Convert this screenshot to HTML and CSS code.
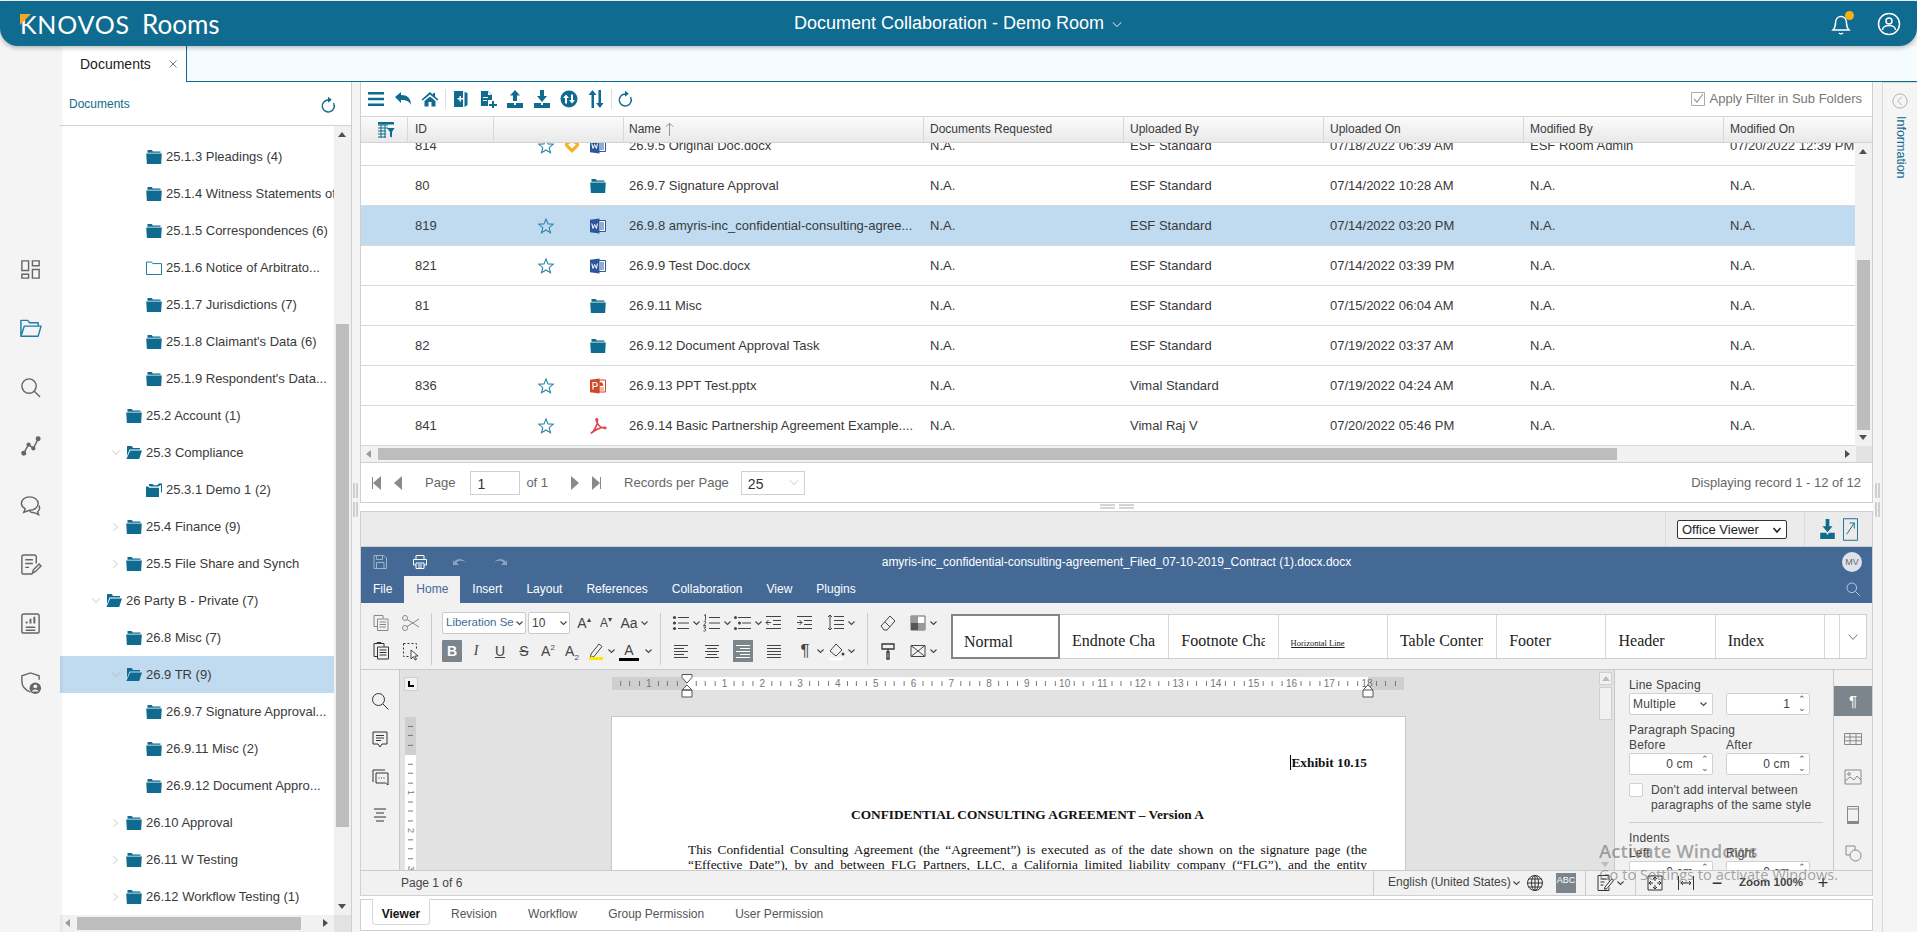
FILE: index.html
```html
<!DOCTYPE html>
<html lang="en">
<head>
<meta charset="utf-8">
<title>Knovos Rooms</title>
<link rel="stylesheet" href="styles.css">
</head>
<body>
<svg class="defs" aria-hidden="true">
  <symbol id="folder" viewBox="0 0 16 14"><path d="M1.5 0h4.2l1.2 1.4h7.6v1.4H1.5z"/><path d="M.2 3.6h15.6l-.7 10.4H.9z"/></symbol>
  <symbol id="folder-open" viewBox="0 0 16 14"><path d="M1 0h4.600l1.500 2H14v1.600H3.600L1 10z"/><path d="M4.200 4.600H16L13.200 13H.4z"/></symbol>
  <symbol id="folder-half" viewBox="0 0 16 14"><path d="M3 1h3.600l1.200 1.200h3.200L13 .6h3v9h-1V2L12 3.600H4.500L3 2.800z"/><path d="M0 3.600h2l1.400 1.200H13V14H0z"/></symbol>
  <symbol id="folder-line" viewBox="0 0 16 14"><path d="M.5 1h5l1.300 1.600h8.700v10.900H.5z" fill="none" stroke="currentColor"/></symbol>
  <symbol id="star" viewBox="0 0 16 16"><path d="M8 1l2 4.900 5.200.4-4 3.400 1.300 5.100L8 12l-4.500 2.800 1.300-5.100-4-3.400 5.200-.4z" fill="none" stroke="#2f88ad" stroke-width="1.100"/></symbol>
  <symbol id="badge" viewBox="0 0 16 16"><path d="M1 5l7-4 7 4v3l-7 7-7-7zM4 6.500l4 4 4-4-4-2z" fill="#f5b324" fill-rule="evenodd"/></symbol>
  <symbol id="word" viewBox="0 0 16 16"><path d="M9 2.500h6.500v11H9" fill="#fff" stroke="#2b579a"/><path d="M10 5h4M10 7h4M10 9h4M10 11h4" stroke="#2b579a"/><path d="M0 1.800 9.500.4v15.200L0 14.200z" fill="#2b579a"/><path d="M1.800 5.500l1.200 5 1.700-4 1.700 4 1.100-5" fill="none" stroke="#fff"/></symbol>
  <symbol id="ppt" viewBox="0 0 16 16"><path d="M9 2h6.500v12H9z" fill="#fff" stroke="#d24726"/><path d="M10 4.500a3 3 0 0 1 3 3h-3zM10 10h4M10 12h4" fill="#d24726" stroke="#d24726" stroke-width=".8"/><path d="M0 1.800 9.500.4v15.200L0 14.200z" fill="#d24726"/><path d="M3 11.500v-7h2.200a2 2 0 0 1 0 4H3" fill="none" stroke="#fff" stroke-width="1.200"/></symbol>
  <symbol id="pdf" viewBox="0 0 16 16"><path d="M.8 15.400C4 13.500 8 6.500 7.400 1.300c-.1-1-1.500-.6-1.300.6.600 4 4 8 9 8.600 1 .1 1-1.100 0-1.100-4.800-.3-10 2.600-14.300 6z" fill="none" stroke="#e2454f" stroke-width="1.700"/></symbol>
  <symbol id="chev-r" viewBox="0 0 10 14"><path d="M2 1.500 8 7l-6 5.500" fill="none" stroke="#b0b0b0"/></symbol>
  <symbol id="chev-d" viewBox="0 0 14 10"><path d="M1.500 2 7 8l5.500-6" fill="none" stroke="#b0b0b0"/></symbol>
  <symbol id="chev-dark" viewBox="0 0 14 10"><path d="M1.500 2 7 8l5.500-6" fill="none" stroke="#555"/></symbol>
  <symbol id="v" viewBox="0 0 10 10"><path d="M2 3.500 5 6.500l3-3" fill="none" stroke="#444" stroke-width="1.100"/></symbol>
  <symbol id="refresh" viewBox="0 0 16 18"><path d="M12.500 7a6 6 0 1 1-5-3" fill="none" stroke="currentColor" stroke-width="1.400"/><path d="M7 .8v6l3.800-3z" fill="currentColor"/></symbol>
  <symbol id="i-list" viewBox="0 0 20 20"><path d="M7 4.500h11M7 10h11M7 15.500h11" stroke="#444"/><circle cx="3.500" cy="4.500" r="1.600" fill="#444"/><circle cx="3.500" cy="10" r="1.600" fill="#444"/><circle cx="3.500" cy="15.500" r="1.600" fill="#444"/></symbol>
  <symbol id="i-num" viewBox="0 0 20 20"><path d="M7 4.500h11M7 10h11M7 15.500h11" stroke="#444"/><path d="M2 2.500l1.500-1v6M1.500 9c1-1.500 3-.5 2 1L1.500 12.500H4M1.500 14H4l-1.500 1.800c1.500 0 1.500 2.500 0 2.500-.5 0-1-.2-1.200-.6" fill="none" stroke="#444" stroke-width=".9"/></symbol>
  <symbol id="i-multi" viewBox="0 0 20 20"><path d="M5 4.500h13M9 10h9M5 15.500h13" stroke="#444"/><circle cx="2.500" cy="4.500" r="1.500" fill="#444"/><circle cx="6.500" cy="10" r="1.500" fill="#444"/><circle cx="2.500" cy="15.500" r="1.500" fill="#444"/></symbol>
  <symbol id="i-out" viewBox="0 0 20 20"><path d="M2 3.500h15M9 7.500h8M9 11.500h8M2 15.500h15M7 9.500H2m2.500-2.500L2 9.500 4.500 12" fill="none" stroke="#444"/></symbol>
  <symbol id="i-in" viewBox="0 0 20 20"><path d="M2 3.500h15M9 7.500h8M9 11.500h8M2 15.500h15M2 9.500h5M4.500 7 7 9.500 4.500 12" fill="none" stroke="#444"/></symbol>
  <symbol id="i-space" viewBox="0 0 20 20"><path d="M8 3.500h10M8 7.500h10M8 11.500h10M8 15.500h10M4 2v15M2 4l2-2 2 2M2 15l2 2 2-2" fill="none" stroke="#444"/></symbol>
  <symbol id="i-al" viewBox="0 0 20 20"><path d="M3 4.500h14M3 7.500h10M3 10.500h14M3 13.500h10M3 16.500h14" stroke="currentColor"/></symbol>
  <symbol id="i-ac" viewBox="0 0 20 20"><path d="M3 4.500h14M5 7.500h10M3 10.500h14M5 13.500h10M3 16.500h14" stroke="currentColor"/></symbol>
  <symbol id="i-ar" viewBox="0 0 20 20"><path d="M3 4.500h14M7 7.500h10M3 10.500h14M7 13.500h10M3 16.500h14" stroke="currentColor"/></symbol>
  <symbol id="i-aj" viewBox="0 0 20 20"><path d="M3 4.500h14M3 7.500h14M3 10.500h14M3 13.500h14M3 16.500h14" stroke="currentColor"/></symbol>
  <symbol id="i-copy" viewBox="0 0 20 20"><path d="M3 2.500h9v3M3 2.500v11h3M6.500 6h10.500v11.500H6.500z" fill="none" stroke="currentColor"/><path d="M8.500 9h6.500M8.500 11.500h6.500M8.500 14h6.500" stroke="currentColor"/></symbol>
  <symbol id="i-cut" viewBox="0 0 20 20"><circle cx="4" cy="5" r="2.500" fill="none" stroke="currentColor"/><circle cx="4" cy="15" r="2.500" fill="none" stroke="currentColor"/><path d="M6 6.500 18 14M6 13.500 18 6" stroke="currentColor"/></symbol>
  <symbol id="i-paste" viewBox="0 0 20 20"><path d="M6 2.500H3v13h3M6 2.500h4v-1H6zM10 2.500h3v3" fill="none" stroke="#333"/><path d="M6.500 6h11v12h-11zM8.500 9h7M8.500 11.500h7M8.500 14h7" fill="none" stroke="#333"/></symbol>
  <symbol id="i-sel" viewBox="0 0 20 20"><path d="M2.500 2.500h13v6M2.500 2.500v13h6" fill="none" stroke="#333" stroke-dasharray="2 2"/><path d="M10 9v9l2.400-2.400 1.600 3.400 1.500-.7-1.600-3.300H17z" fill="#fff" stroke="#333" stroke-width=".9"/></symbol>
  <symbol id="i-erase" viewBox="0 0 20 20"><path d="M3 13 12 3l5 5-8 9H6z" fill="none" stroke="#444"/><path d="M7 9l5 5" stroke="#444"/></symbol>
  <symbol id="i-color" viewBox="0 0 20 20"><path d="M3 3h14v14H3z" fill="#fff" stroke="#666"/><path d="M3 10h7V3H3zM10 10h7v7h-7z" fill="#999"/><path d="M3 10h7v7H3z" fill="#555"/></symbol>
  <symbol id="i-brush" viewBox="0 0 20 20"><path d="M4 3h12v5H4zM10 8v3h-1v7h2v-7h-1" fill="none" stroke="#333" stroke-width="1.300"/></symbol>
  <symbol id="i-mail" viewBox="0 0 20 20"><path d="M3 4.500h14v11H3zM3 4.500l14 11M17 4.500l-14 11" fill="none" stroke="#444"/></symbol>
  <symbol id="i-pen" viewBox="0 0 20 20"><path d="M5 13 13 3l3 2.500-8 10-3.500 1z" fill="none" stroke="#444"/><path d="M3 16h14v3H3z" fill="#ffe600"/></symbol>
  <symbol id="i-fill" viewBox="0 0 20 20"><path d="M4 10l6-7 6 6-6 6z" fill="none" stroke="#444"/><circle cx="17" cy="13" r="1.500" fill="#444"/><path d="M3 17h14v2.500H3z" fill="#fff"/></symbol>
  <symbol id="i-search" viewBox="0 0 20 20"><circle cx="8.500" cy="8.500" r="6" fill="none" stroke="currentColor"/><path d="m13 13 5.500 5.500" stroke="currentColor"/></symbol>
  <symbol id="i-comment" viewBox="0 0 20 20"><path d="M3 3h14v12h-5l-2 3-2-3H3zM6 6.500h8M6 9h8M6 11.500h5" fill="none" stroke="#333"/></symbol>
  <symbol id="i-comments" viewBox="0 0 20 20"><path d="M3 15V3h12M6 6h12v12l-2.500-2H6z" fill="none" stroke="#333"/><path d="M8.500 11h1M11 11h1M13.500 11h1" stroke="#333"/></symbol>
  <symbol id="i-nav" viewBox="0 0 20 20"><path d="M4 4h12M6 8h8M4 12h12M6 16h8" stroke="#333"/></symbol>
  <symbol id="i-table" viewBox="0 0 20 20"><path d="M1.500 4.500h17v11h-17zM1.500 8h17M1.500 11.800h17M7 4.500v11M13 4.500v11" fill="none" stroke="#888"/></symbol>
  <symbol id="i-image" viewBox="0 0 20 20"><path d="M2 3h16v14H2z" fill="none" stroke="#888"/><circle cx="6" cy="7" r="1.300" fill="none" stroke="#888"/><path d="M2 14l5-4 4 3 3-4 4 4" fill="none" stroke="#888"/></symbol>
  <symbol id="i-page" viewBox="0 0 20 20"><path d="M4.500 1.500h11v17h-11zM4.500 4h11" fill="none" stroke="#888"/><path d="M4.500 16h11v2.500h-11z" fill="#888"/></symbol>
  <symbol id="i-shape" viewBox="0 0 20 20"><path d="M3 3h9v4M3 3v9h4" fill="none" stroke="#888"/><circle cx="12.500" cy="12.500" r="5.500" fill="none" stroke="#888"/></symbol>
  <symbol id="i-globe" viewBox="0 0 20 20"><circle cx="10" cy="10" r="7.500" fill="none" stroke="#333"/><ellipse cx="10" cy="10" rx="3.500" ry="7.500" fill="none" stroke="#333"/><path d="M10 2.500v15M2.500 10h15M3.500 6h13M3.500 14h13" stroke="#333" fill="none"/></symbol>
  <symbol id="i-edit" viewBox="0 0 20 20"><path d="M3 2.500h11v5M3 2.500v15h11v-3M5.500 6h6M5.500 9h4M5.500 12h3" fill="none" stroke="#333"/><path d="M10 14 16.500 6l2 1.600L12 15.500l-2.500.8z" fill="none" stroke="#333"/></symbol>
  <symbol id="i-fit" viewBox="0 0 20 20"><path d="M3 3h14v14H3zM10 4v4m-2-2 2-2 2 2M10 16v-4m-2 2 2 2 2-2M4 10h4M6 8l-2 2 2 2M16 10h-4M14 8l2 2-2 2" fill="none" stroke="#333"/></symbol>
  <symbol id="i-fitw" viewBox="0 0 20 20"><path d="M2.500 3v14M17.500 3v14M5 10h10M7 8l-2 2 2 2M13 8l2 2-2 2" fill="none" stroke="#333"/></symbol>
</svg>

<header class="topbar">
  <div class="brand"><span class="logo-word">KNOVOS</span><span class="logo-rooms">Rooms</span><svg class="logo-mark" viewBox="0 0 10 10"><path d="M0 0h10L0 10z" fill="#f5a623"/></svg></div>
  <div class="room-title">Document Collaboration - Demo Room<svg class="room-chev" viewBox="0 0 14 10"><path d="M2 2.500 7 7.500l5-5" fill="none" stroke="#a9c8d6" stroke-width="1.200"/></svg></div>
  <div class="top-actions">
    <span class="bell"><svg viewBox="0 0 22 24" width="22" height="24"><path d="M3 18c2-2 2.500-3.500 2.500-7 0-4 2.500-6.500 5.500-6.500s5.500 2.500 5.500 6.500c0 3.500.5 5 2.500 7zM9 21c1 1 3 1 4 0" fill="none" stroke="#fff" stroke-width="1.500"/></svg><i class="bell-dot"></i></span>
    <svg class="user" viewBox="0 0 24 24" width="24" height="24"><circle cx="12" cy="12" r="10.500" fill="none" stroke="#fff" stroke-width="1.500"/><circle cx="12" cy="9" r="3" fill="none" stroke="#fff" stroke-width="1.500"/><path d="M5.500 18c0-6 13-6 13 0" fill="none" stroke="#fff" stroke-width="1.500"/></svg>
  </div>
</header>

<div class="main">
  <nav class="rail">
    <svg viewBox="0 0 24 24" class="rail-i"><path d="M3 3h7v10H3zM14 3h7v5h-7zM3 17h7v4H3zM14 12h7v9h-7z" fill="none" stroke="#666" stroke-width="1.500"/></svg>
    <svg viewBox="0 0 24 24" class="rail-i"><path d="M2 20V3.500h7l2 2.500h9v3M2 20l3.500-10.500H23L20 20z" fill="none" stroke="#1a7ea6" stroke-width="1.500" stroke-linejoin="round"/></svg>
    <svg viewBox="0 0 24 24" class="rail-i"><circle cx="10.500" cy="10.500" r="7.500" fill="none" stroke="#666" stroke-width="1.500"/><path d="m16 16 6 6" stroke="#666" stroke-width="1.500"/></svg>
    <svg viewBox="0 0 24 24" class="rail-i"><path d="M5 19 10 10l5 4 5-10" fill="none" stroke="#666" stroke-width="1.500"/><circle cx="5" cy="19" r="2.600" fill="#666"/><circle cx="10" cy="10" r="2.200" fill="#666"/><circle cx="15" cy="14" r="2.200" fill="#666"/><circle cx="20" cy="4" r="2.600" fill="#666"/></svg>
    <svg viewBox="0 0 24 24" class="rail-i"><path d="M11 3c5 0 9 3 9 7 0 4-4 7-9 7l-6 2 1.500-3.500C4 14 2.500 12 2.500 10 2.500 6 6 3 11 3z" fill="none" stroke="#666" stroke-width="1.500"/><path d="M21 12c1 3 .5 5-1.500 6.500l1 3-4.500-2c-2 0-4-.5-5-1.500" fill="none" stroke="#666" stroke-width="1.500"/></svg>
    <svg viewBox="0 0 24 24" class="rail-i"><path d="M14 22H5a2 2 0 0 1-2-2V4a2 2 0 0 1 2-2h11a2 2 0 0 1 2 2v7" fill="none" stroke="#666" stroke-width="1.500"/><path d="M6.500 7h8M6.500 11h8M6.500 15h4" stroke="#666" stroke-width="1.500"/><path d="M14 21l1-3.500 6-6 2 2-6 6z" fill="none" stroke="#666" stroke-width="1.500"/></svg>
    <svg viewBox="0 0 24 24" class="rail-i"><rect x="3" y="2" width="18" height="20" rx="2" fill="none" stroke="#666" stroke-width="1.500"/><path d="M7 16h10M7 19h10" stroke="#666" stroke-width="1.500"/><path d="M8 12V10M12 12V7M16 12V5" stroke="#666" stroke-width="2"/></svg>
    <svg viewBox="0 0 24 24" class="rail-i"><path d="M12 22C7 20 3 17 3 11V5l9-3 9 3v4" fill="none" stroke="#666" stroke-width="1.500"/><circle cx="17" cy="18" r="6" fill="#666"/><circle cx="17" cy="16" r="2" fill="#f4f4f4"/><path d="M13.500 21.500c.5-3 6.500-3 7 0" fill="#f4f4f4"/></svg>
  </nav>

  <div class="content">
    <div class="tabstrip">
      <div class="doc-tab"><span>Documents</span><svg class="tab-x" viewBox="0 0 10 10"><path d="M1.500 1.500l7 7M8.500 1.500l-7 7" stroke="#777"/></svg></div>
      <div class="tab-fill"></div>
    </div>
    <div class="workspace">
      <aside class="tree-panel">
        <div class="tree-head"><span>Documents</span><svg class="tree-refresh"><use href="#refresh"/></svg></div>
        <div class="tree-mid">
          <div class="tree-scrollview">
            <ul class="tree">
              <li class="t-row l3"><span class="slot"></span><svg class="fi"><use href="#folder"/></svg><span class="t-label">25.1.3 Pleadings (4)</span></li>
              <li class="t-row l3"><span class="slot"></span><svg class="fi"><use href="#folder"/></svg><span class="t-label">25.1.4 Witness Statements of</span></li>
              <li class="t-row l3"><span class="slot"></span><svg class="fi"><use href="#folder"/></svg><span class="t-label">25.1.5 Correspondences (6)</span></li>
              <li class="t-row l3"><span class="slot"></span><svg class="fi"><use href="#folder-line"/></svg><span class="t-label">25.1.6 Notice of Arbitrato...</span></li>
              <li class="t-row l3"><span class="slot"></span><svg class="fi"><use href="#folder"/></svg><span class="t-label">25.1.7 Jurisdictions (7)</span></li>
              <li class="t-row l3"><span class="slot"></span><svg class="fi"><use href="#folder"/></svg><span class="t-label">25.1.8 Claimant's Data (6)</span></li>
              <li class="t-row l3"><span class="slot"></span><svg class="fi"><use href="#folder"/></svg><span class="t-label">25.1.9 Respondent's Data...</span></li>
              <li class="t-row l2"><span class="slot"></span><svg class="fi"><use href="#folder"/></svg><span class="t-label">25.2 Account (1)</span></li>
              <li class="t-row l2"><span class="slot"><svg class="ch-d"><use href="#chev-d"/></svg></span><svg class="fi"><use href="#folder-open"/></svg><span class="t-label">25.3 Compliance</span></li>
              <li class="t-row l3"><span class="slot"></span><svg class="fi"><use href="#folder-half"/></svg><span class="t-label">25.3.1 Demo 1 (2)</span></li>
              <li class="t-row l2"><span class="slot"><svg class="ch-r"><use href="#chev-r"/></svg></span><svg class="fi"><use href="#folder"/></svg><span class="t-label">25.4 Finance (9)</span></li>
              <li class="t-row l2"><span class="slot"><svg class="ch-r"><use href="#chev-r"/></svg></span><svg class="fi"><use href="#folder"/></svg><span class="t-label">25.5 File Share and Synch</span></li>
              <li class="t-row l1"><span class="slot"><svg class="ch-d"><use href="#chev-d"/></svg></span><svg class="fi"><use href="#folder-open"/></svg><span class="t-label">26 Party B - Private (7)</span></li>
              <li class="t-row l2"><span class="slot"></span><svg class="fi"><use href="#folder"/></svg><span class="t-label">26.8 Misc (7)</span></li>
              <li class="t-row l2 t-sel"><span class="slot"><svg class="ch-d"><use href="#chev-d"/></svg></span><svg class="fi"><use href="#folder-open"/></svg><span class="t-label">26.9 TR (9)</span></li>
              <li class="t-row l3"><span class="slot"></span><svg class="fi"><use href="#folder"/></svg><span class="t-label">26.9.7 Signature Approval...</span></li>
              <li class="t-row l3"><span class="slot"></span><svg class="fi"><use href="#folder"/></svg><span class="t-label">26.9.11 Misc (2)</span></li>
              <li class="t-row l3"><span class="slot"></span><svg class="fi"><use href="#folder"/></svg><span class="t-label">26.9.12 Document Appro...</span></li>
              <li class="t-row l2"><span class="slot"><svg class="ch-r"><use href="#chev-r"/></svg></span><svg class="fi"><use href="#folder"/></svg><span class="t-label">26.10 Approval</span></li>
              <li class="t-row l2"><span class="slot"><svg class="ch-r"><use href="#chev-r"/></svg></span><svg class="fi"><use href="#folder"/></svg><span class="t-label">26.11 W Testing</span></li>
              <li class="t-row l2"><span class="slot"><svg class="ch-r"><use href="#chev-r"/></svg></span><svg class="fi"><use href="#folder"/></svg><span class="t-label">26.12 Workflow Testing (1)</span></li>
            </ul>
          </div>
          <div class="tree-vscroll"><i class="tri-up"></i><b class="tree-vthumb"></b><i class="tri-down"></i></div>
        </div>
        <div class="tree-hscroll"><i class="tri-left"></i><b class="tree-hthumb"></b><i class="tri-right"></i><span class="sb-corner"></span></div>
      </aside>

      <div class="gutter"><svg viewBox="0 0 6 34" width="6" height="34"><path d="M1 0v15M4 0v15M1 19v15M4 19v15" stroke="#aaa"/></svg></div>

      <section class="right-col">
        <div class="grid-wrap">
          <div class="toolbar">
            <svg class="tb" viewBox="0 0 18 18"><path d="M1 2h16v2.500H1zM1 7.800h16v2.500H1zM1 13.500h16V16H1z"/></svg>
            <svg class="tb" viewBox="0 0 18 18"><path d="M1 7l6-5v3c6 0 10 3 10 10-1.500-3.500-4-5-10-5v3z"/></svg>
            <svg class="tb" viewBox="0 0 18 18"><path d="M9 2 0.500 9.500l1.200 1L9 4.500l7.300 6 1.200-1L14 6.500V3h-2v1.800zM3.500 11 9 6.500l5.500 4.500v5.500h-4V12h-3v4.500h-4z"/></svg>
            <i class="tb-sep"></i>
            <svg class="tb" viewBox="0 0 18 18"><path d="M2 1h9v16H2zM12.500 2l3 1v12l-3 2zM5.500 8h2V6h1.500v2H11v1.500H9v2H7.500v-2h-2z" fill-rule="evenodd"/></svg>
            <svg class="tb" viewBox="0 0 18 18"><path d="M2 1h7l4 4v5H9v6H2zM9 1.500V5h3.500L9 1.500zM4 7h5v1H4zM4 10h4v1H4zM13 11h2v3h3v2h-3v2h-2v-2h-3v-2h3z" fill-rule="evenodd"/></svg>
            <svg class="tb" viewBox="0 0 18 18"><path d="M9 0l5 5.500h-3V11H7V5.500H4zM1 13h7v2h2v-2h7v5H1z"/></svg>
            <svg class="tb" viewBox="0 0 18 18"><path d="M7 0h4v6h3l-5 6-5-6h3zM1 13h7v2h2v-2h7v5H1z"/></svg>
            <svg class="tb" viewBox="0 0 18 18"><circle cx="9" cy="9" r="8.500"/><path d="M6 4.500l3 3.500H7v5.500H5V8H3zM12 13.500 9 10h2V4.500h2V10h2z" fill="#fff"/></svg>
            <svg class="tb" viewBox="0 0 18 18"><path d="M5.500 0l4 5H7v13H4.500V5H1.500zM13 18l-4-5h2.500V0H14v13h2.500z"/></svg>
            <i class="tb-sep"></i>
            <svg class="tb tb-refresh"><use href="#refresh"/></svg>
            <label class="apply"><svg viewBox="0 0 14 14" width="14" height="14"><path d="M.5.500h13v13H.5z" fill="#fff" stroke="#aaa"/><path d="M3 7l3 3 6-8" fill="none" stroke="#999" stroke-width="1.200"/></svg><span>Apply Filter in Sub Folders</span></label>
          </div>
          <div class="g-head g-cols">
            <div class="gh"><svg class="grid-filter" viewBox="0 0 18 18"><path d="M1 1h16v2.500H1z" fill="#0f6b8f"/><path d="M1 4h10M1 7h10M1 10h8M1 13h8M1 16h8M4 4v13M8 4v13" stroke="#0f6b8f" fill="none"/><path d="M10 7h7.500L15 11v5.500l-2-1V11z" fill="#0f6b8f"/></svg></div>
            <div class="gh gh-id">ID</div>
            <div class="gh"></div>
            <div class="gh gh-name">Name<svg class="sort-up" viewBox="0 0 10 16"><path d="M5 15V1M1 5l4-4 4 4" fill="none" stroke="#888"/></svg></div>
            <div class="gh">Documents Requested</div>
            <div class="gh">Uploaded By</div>
            <div class="gh">Uploaded On</div>
            <div class="gh">Modified By</div>
            <div class="gh">Modified On</div>
          </div>
          <div class="g-mid">
            <div class="g-view">
              <div class="g-rows">
                <div class="g-row g-cols"><span></span><span>814</span><span class="acts"><svg><use href="#star"/></svg><svg><use href="#badge"/></svg><svg><use href="#word"/></svg></span><span>26.9.5 Original Doc.docx</span><span>N.A.</span><span>ESF Standard</span><span>07/18/2022 06:39 AM</span><span>ESF Room Admin</span><span>07/20/2022 12:39 PM</span></div>
                <div class="g-row g-cols"><span></span><span>80</span><span class="acts"><i></i><i></i><svg class="fo"><use href="#folder"/></svg></span><span>26.9.7 Signature Approval</span><span>N.A.</span><span>ESF Standard</span><span>07/14/2022 10:28 AM</span><span>N.A.</span><span>N.A.</span></div>
                <div class="g-row g-cols g-sel"><span></span><span>819</span><span class="acts"><svg><use href="#star"/></svg><i></i><svg><use href="#word"/></svg></span><span>26.9.8 amyris-inc_confidential-consulting-agree...</span><span>N.A.</span><span>ESF Standard</span><span>07/14/2022 03:20 PM</span><span>N.A.</span><span>N.A.</span></div>
                <div class="g-row g-cols"><span></span><span>821</span><span class="acts"><svg><use href="#star"/></svg><i></i><svg><use href="#word"/></svg></span><span>26.9.9 Test Doc.docx</span><span>N.A.</span><span>ESF Standard</span><span>07/14/2022 03:39 PM</span><span>N.A.</span><span>N.A.</span></div>
                <div class="g-row g-cols"><span></span><span>81</span><span class="acts"><i></i><i></i><svg class="fo"><use href="#folder"/></svg></span><span>26.9.11 Misc</span><span>N.A.</span><span>ESF Standard</span><span>07/15/2022 06:04 AM</span><span>N.A.</span><span>N.A.</span></div>
                <div class="g-row g-cols"><span></span><span>82</span><span class="acts"><i></i><i></i><svg class="fo"><use href="#folder"/></svg></span><span>26.9.12 Document Approval Task</span><span>N.A.</span><span>ESF Standard</span><span>07/19/2022 03:37 AM</span><span>N.A.</span><span>N.A.</span></div>
                <div class="g-row g-cols"><span></span><span>836</span><span class="acts"><svg><use href="#star"/></svg><i></i><svg><use href="#ppt"/></svg></span><span>26.9.13 PPT Test.pptx</span><span>N.A.</span><span>Vimal Standard</span><span>07/19/2022 04:24 AM</span><span>N.A.</span><span>N.A.</span></div>
                <div class="g-row g-cols"><span></span><span>841</span><span class="acts"><svg><use href="#star"/></svg><i></i><svg><use href="#pdf"/></svg></span><span>26.9.14 Basic Partnership Agreement Example....</span><span>N.A.</span><span>Vimal Raj V</span><span>07/20/2022 05:46 PM</span><span>N.A.</span><span>N.A.</span></div>
              </div>
            </div>
            <div class="g-vscroll"><i class="tri-up"></i><b class="g-vthumb"></b><i class="tri-down"></i></div>
          </div>
          <div class="g-hscroll"><i class="tri-left"></i><b class="g-hthumb"></b><i class="tri-right"></i><span class="sb-corner g-corner"></span></div>
          <div class="pager">
            <i class="pg-first"></i><i class="pg-prev"></i>
            <span class="pg-page">Page</span><span class="pg-input">1</span><span class="pg-of">of 1</span>
            <i class="pg-next"></i><i class="pg-last"></i>
            <span class="pg-rpp">Records per Page</span>
            <span class="pg-select">25<svg><use href="#chev-d"/></svg></span>
            <span class="pg-display">Displaying record 1 - 12 of 12</span>
          </div>
        </div>
        <div class="splitter"><svg viewBox="0 0 34 6" width="34" height="6"><path d="M0 1h15M0 4h15M19 1h15M19 4h15" stroke="#aaa"/></svg></div>
        <div class="viewer-bar">
          <div class="vb-box"><span class="vb-select">Office Viewer<svg viewBox="0 0 10 10"><path d="M1.500 3 5 7l3.500-4" fill="none" stroke="#222" stroke-width="1.600"/></svg></span></div>
          <div class="vb-actions">
            <svg class="vb-dl" viewBox="0 0 18 22"><path d="M7 0h4v8h3.500L9 14.500 3.500 8H7zM1 15h7v2h2v-2h7v7H1z" fill="#0f6b8f"/></svg>
            <svg class="vb-open" viewBox="0 0 16 24"><path d="M.5.500h15v23H.5zM4 17 12 5M7 5h5v6" fill="none" stroke="#0f6b8f"/></svg>
          </div>
        </div>

        <div class="editor">
          <div class="ed-head">
            <div class="ed-title-row">
              <div class="ed-quick">
                <svg class="eq" viewBox="0 0 16 16"><path d="M2 1.500h10l2.500 2.500v10.500h-12.500zM4.500 1.500v4h6v-4M4.500 14.500v-6h7.500v6" fill="none" stroke="#9fb3c9"/></svg>
                <svg class="eq" viewBox="0 0 16 16"><path d="M4 5V1.500h8V5M4 11H1.500V5.500h13V11H12M4 9h8v5.500H4zM6 11h4M6 13h4" fill="none" stroke="#fff"/></svg>
                <svg class="eq" viewBox="0 0 16 16"><path d="M2 8c3-4 9-4 12 1-3-2.500-7-3-9.500-.5L7 11H1V5.500z" fill="#8ba2bd"/></svg>
                <svg class="eq" viewBox="0 0 16 16"><path d="M14 8c-3-4-9-4-12 1 3-2.500 7-3 9.500-.5L9 11h6V5.500z" fill="#8ba2bd"/></svg>
              </div>
              <span class="ed-filename">amyris-inc_confidential-consulting-agreement_Filed_07-10-2019_Contract (1).docx.docx</span>
              <div class="ed-user"><span class="avatar">MV</span></div>
            </div>
            <div class="ed-tab-row">
              <span class="ed-tab">File</span><span class="ed-tab ed-tab-on">Home</span><span class="ed-tab">Insert</span><span class="ed-tab">Layout</span><span class="ed-tab">References</span><span class="ed-tab">Collaboration</span><span class="ed-tab">View</span><span class="ed-tab">Plugins</span>
              <svg class="ed-search"><use href="#i-search"/></svg>
            </div>
          </div>

          <div class="ribbon">
            <div class="rb-clip">
              <svg class="ic dim"><use href="#i-copy"/></svg><svg class="ic dim"><use href="#i-cut"/></svg>
              <svg class="ic"><use href="#i-paste"/></svg><svg class="ic"><use href="#i-sel"/></svg>
            </div>
            <i class="rb-sep"></i>
            <div class="rb-font">
              <div class="rb-line">
                <span class="rb-combo c-font"><span class="c-text">Liberation Serif</span><svg class="vv"><use href="#v"/></svg></span>
                <span class="rb-combo c-size"><span class="c-text">10</span><svg class="vv"><use href="#v"/></svg></span>
                <span class="tx a-plus">A<sup>▴</sup></span><span class="tx a-minus">A<sup>▾</sup></span><span class="tx a-case">Aa</span><svg class="vv"><use href="#v"/></svg>
              </div>
              <div class="rb-line rb-fmt">
                <span class="tx t-b">B</span><span class="tx t-i">I</span><span class="tx t-u">U</span><span class="tx t-s">S</span><span class="tx">A<sup>2</sup></span><span class="tx">A<sub>2</sub></span>
                <svg class="ic"><use href="#i-pen"/></svg><svg class="vv vv-tight"><use href="#v"/></svg>
                <span class="tx t-color">A</span><svg class="vv"><use href="#v"/></svg>
              </div>
            </div>
            <i class="rb-sep rb-sep2"></i>
            <div class="rb-para">
              <svg class="ic"><use href="#i-list"/></svg><svg class="vv"><use href="#v"/></svg>
              <svg class="ic"><use href="#i-num"/></svg><svg class="vv"><use href="#v"/></svg>
              <svg class="ic"><use href="#i-multi"/></svg><svg class="vv"><use href="#v"/></svg>
              <svg class="ic"><use href="#i-out"/></svg><i></i>
              <svg class="ic"><use href="#i-in"/></svg><i></i>
              <svg class="ic"><use href="#i-space"/></svg><svg class="vv"><use href="#v"/></svg>
              <svg class="ic"><use href="#i-al"/></svg><i></i>
              <svg class="ic"><use href="#i-ac"/></svg><i></i>
              <svg class="ic ic-on"><use href="#i-ar"/></svg><i></i>
              <svg class="ic"><use href="#i-aj"/></svg><i></i>
              <span class="tx t-para">¶</span><svg class="vv"><use href="#v"/></svg>
              <svg class="ic"><use href="#i-fill"/></svg><svg class="vv"><use href="#v"/></svg>
            </div>
            <i class="rb-sep rb-sep3"></i>
            <div class="rb-misc">
              <svg class="ic"><use href="#i-erase"/></svg><i></i><svg class="ic"><use href="#i-color"/></svg><svg class="vv"><use href="#v"/></svg>
              <svg class="ic"><use href="#i-brush"/></svg><i></i><svg class="ic"><use href="#i-mail"/></svg><svg class="vv"><use href="#v"/></svg>
            </div>
            <div class="gallery">
              <span class="st st-on"><span>Normal</span></span>
              <span class="st"><span>Endnote Character</span></span>
              <span class="st"><span>Footnote Character</span></span>
              <span class="st st-hr"><span>Horizontal Line</span></span>
              <span class="st"><span>Table Contents</span></span>
              <span class="st"><span>Footer</span></span>
              <span class="st"><span>Header</span></span>
              <span class="st"><span>Index</span></span>
              <span class="st st-blank"></span>
              <span class="st-more"><svg><use href="#chev-dark"/></svg></span>
            </div>
          </div>

          <div class="ed-body">
            <div class="ed-left">
              <svg class="ic-l"><use href="#i-search"/></svg>
              <svg class="ic-l"><use href="#i-comment"/></svg>
              <svg class="ic-l"><use href="#i-comments"/></svg>
              <svg class="ic-l"><use href="#i-nav"/></svg>
            </div>
            <div class="canvas">
              <div class="ruler-row">
                <span class="l-btn"><b></b></span>
                <div class="h-ruler">
                  <span>1</span><span></span><span>1</span><span>2</span><span>3</span><span>4</span><span>5</span><span>6</span><span>7</span><span>8</span><span>9</span><span>10</span><span>11</span><span>12</span><span>13</span><span>14</span><span>15</span><span>16</span><span>17</span><span>18</span>
                  <svg class="mk mk-l" viewBox="0 0 12 24"><path d="M1 .5h10v3L6 9 1 3.500zM1 16l5-5 5 5zM1 16h10v7H1z" fill="#fff" stroke="#555"/></svg>
                  <svg class="mk mk-r" viewBox="0 0 12 24"><path d="M1 23v-7l5-5 5 5v7zM1 16h10" fill="#fff" stroke="#555"/></svg>
                </div>
              </div>
              <div class="page-row">
                <div class="v-ruler"><span>1</span><span>2</span><span>3</span></div>
                <article class="page">
                  <p class="p-exhibit"><span class="caret">Exhibit 10.15</span></p>
                  <p class="p-title">CONFIDENTIAL CONSULTING AGREEMENT – Version A</p>
                  <p class="p-just">This Confidential Consulting Agreement (the “Agreement”) is executed as of the date shown on the signature page (the</p>
                  <p class="p-just">“Effective Date”), by and between FLG Partners, LLC, a California limited liability company (“FLG”), and the entity</p>
                </article>
              </div>
            </div>
            <div class="c-scroll"><i class="c-btn"><i class="tri-up"></i></i><b class="c-thumb"></b><i class="tri-down c-down"></i></div>
            <div class="side-panel">
              <div class="sp-label">Line Spacing</div>
              <div class="sp-2col">
                <span class="sp-in sp-select">Multiple<svg><use href="#v"/></svg></span>
                <span class="sp-in">1<span class="spin">⌃<br>⌄</span></span>
              </div>
              <div class="sp-label sp-second">Paragraph Spacing</div>
              <div class="sp-2col">
                <div><div class="sp-label">Before</div><span class="sp-in">0 cm<span class="spin">⌃<br>⌄</span></span></div>
                <div><div class="sp-label">After</div><span class="sp-in">0 cm<span class="spin">⌃<br>⌄</span></span></div>
              </div>
              <div class="sp-check"><i></i><span>Don't add interval between<br>paragraphs of the same style</span></div>
              <hr class="sp-hr">
              <div class="sp-label">Indents</div>
              <div class="sp-2col">
                <div><div class="sp-label">Left</div><span class="sp-in">0 cm<span class="spin">⌃<br>⌄</span></span></div>
                <div><div class="sp-label">Right</div><span class="sp-in">0 cm<span class="spin">⌃<br>⌄</span></span></div>
              </div>
            </div>
            <div class="side-tabs">
              <span class="st-on-tab">¶</span>
              <svg class="s-ic"><use href="#i-table"/></svg>
              <svg class="s-ic"><use href="#i-image"/></svg>
              <svg class="s-ic"><use href="#i-page"/></svg>
              <svg class="s-ic"><use href="#i-shape"/></svg>
            </div>
          </div>

          <div class="status">
            <span class="s-page">Page 1 of 6</span>
            <span class="s-lang">English (United States)</span><svg class="vv"><use href="#v"/></svg>
            <svg class="ic s-globe"><use href="#i-globe"/></svg>
            <span class="s-abc">ABC</span>
            <i class="s-sep"></i>
            <svg class="ic"><use href="#i-edit"/></svg><svg class="vv"><use href="#v"/></svg>
            <i class="s-sep"></i>
            <svg class="ic"><use href="#i-fit"/></svg>
            <svg class="ic s-gap"><use href="#i-fitw"/></svg>
            <span class="s-op s-gap">−</span>
            <span class="s-zoom">Zoom 100%</span>
            <span class="s-op">+</span>
          </div>
        </div>

        <div class="bottom-tabs">
          <span class="bt bt-on">Viewer</span><span class="bt">Revision</span><span class="bt">Workflow</span><span class="bt">Group Permission</span><span class="bt">User Permission</span>
        </div>
      </section>

      <div class="gutter gutter-r"><svg viewBox="0 0 6 34" width="6" height="34"><path d="M1 0v15M4 0v15M1 19v15M4 19v15" stroke="#aaa"/></svg></div>

      <aside class="info">
        <svg class="info-chev" viewBox="0 0 18 18"><circle cx="9" cy="9" r="8" fill="none" stroke="#aaa"/><path d="M11 4.500 6.500 9l4.500 4.500" fill="none" stroke="#aaa"/></svg>
        <span class="info-label">Information</span>
      </aside>
    </div>
  </div>
</div>

<div class="watermark"><div class="wm-1">Activate Windows</div><div class="wm-2">Go to Settings to activate Windows.</div></div>
</body>
</html>
```

FILE: styles.css
```css
* { box-sizing: border-box; }
html, body { margin: 0; height: 100%; }
body {
  width: 1917px; height: 932px; overflow: hidden; position: relative;
  display: flex; flex-direction: column;
  background: #f4f4f4; color: #333;
  font: 13px/1.2 "Liberation Sans", Arial, sans-serif;
}
.defs { position: absolute; width: 0; height: 0; }
ul { list-style: none; margin: 0; padding: 0; }
i { font-style: normal; display: block; }
p { margin: 0; }

/* top bar */
.topbar {
  height: 45px; margin-top: 1px; flex: none; position: relative; z-index: 3;
  background: #0f6b8f; color: #fff; border-radius: 0 0 18px 18px;
  box-shadow: 0 2px 4px rgba(0,0,0,.25);
  display: grid; grid-template-columns: 1fr auto 1fr; align-items: center;
}
.brand { position: relative; padding-left: 20px; display: flex; align-items: baseline; height: 28px; }
.logo-word { font: 400 25px/28px Lato, "Liberation Sans", sans-serif; letter-spacing: .8px; width: 110px; white-space: nowrap; }
.logo-rooms { font: 400 26px/28px Lato, "Liberation Sans", sans-serif; margin-left: 12px; }
.logo-mark { position: absolute; left: 20px; top: 4px; width: 11px; height: 11px; }
.room-title { font-size: 18px; display: flex; align-items: center; color: #fff; }
.room-chev { width: 12px; height: 9px; margin-left: 7px; margin-top: 2px; }
.top-actions { display: flex; justify-content: flex-end; align-items: center; gap: 25px; padding-right: 16px; }
.bell { position: relative; width: 22px; height: 24px; }
.bell-dot { position: absolute; right: -2px; top: -1px; width: 9px; height: 9px; border-radius: 50%; background: #f9ae14; }
.user { display: block; }

.main { flex: 1; display: flex; min-height: 0; }

/* rail */
.rail {
  width: 60px; flex: none; position: relative; z-index: 2;
  display: flex; flex-direction: column; align-items: center; gap: 36px; padding-top: 212px;
  background: #f4f4f4; box-shadow: 2px 0 3px rgba(0,0,0,.06);
}
.rail-i { width: 23px; height: 23px; flex: none; }

.content { flex: 1; min-width: 0; display: flex; flex-direction: column; }
.tabstrip { height: 36px; flex: none; display: flex; }
.doc-tab {
  width: 126px; background: #fff; display: flex; align-items: center; padding-left: 20px;
  color: #222; font-size: 14px;
}
.tab-x { width: 10px; height: 10px; margin-left: 17px; }
.tab-fill { flex: 1; background: #f5fcff; border-left: 1px solid #0f6b8f; border-bottom: 1px solid #0f6b8f; }

.workspace { flex: 1; display: flex; min-height: 0; }

/* tree */
.tree-panel { width: 292px; flex: none; background: #fff; border-right: 1px solid #cfcfcf; display: flex; flex-direction: column; }
.tree-head {
  height: 44px; flex: none; display: flex; align-items: center; justify-content: space-between;
  padding: 2px 14px 0 9px; color: #0f6b8f; font-size: 12px; border-bottom: 1px solid #d4d4d4;
}
.tree-refresh { width: 16px; height: 18px; color: #0f6b8f; }
.tree-mid { flex: 1; min-height: 0; display: flex; }
.tree-scrollview { flex: 1; min-width: 0; overflow: hidden; }
.tree { margin-top: 12px; }
.t-row { height: 37px; display: flex; align-items: center; white-space: nowrap; overflow: hidden; color: #3a3a3a; }
.l1 { padding-left: 25px; }
.l2 { padding-left: 45px; }
.l3 { padding-left: 65px; }
.t-sel { background: #c0daf0; }
.slot { width: 21px; flex: none; display: flex; align-items: center; justify-content: center; }
.ch-d { width: 10px; height: 7px; }
.ch-r { width: 7px; height: 10px; }
.fi { width: 16px; height: 14px; flex: none; fill: #0f6b8f; color: #1f7da2; }
.t-label { margin-left: 4px; }
.tree-vscroll, .g-vscroll { width: 17px; flex: none; background: #f1f1f1; position: relative; }
.tree-vthumb { position: absolute; left: 2px; right: 2px; top: 198px; height: 503px; background: #bdbdbd; }
.tree-hscroll, .g-hscroll { height: 17px; flex: none; background: #f1f1f1; position: relative; }
.tree-hthumb { position: absolute; left: 17px; width: 224px; top: 2px; bottom: 2px; background: #bdbdbd; }
.sb-corner { position: absolute; right: 0; top: 0; bottom: 0; width: 17px; background: #e3e3e3; }

.tri-up, .tri-down, .tri-left, .tri-right { position: absolute; width: 0; height: 0; border-style: solid; border-color: transparent; }
.tri-up { left: 4px; top: 6px; border-width: 0 4px 5px; border-bottom-color: #505050; }
.tri-down { left: 4px; bottom: 6px; border-width: 5px 4px 0; border-top-color: #505050; }
.tri-left { left: 5px; top: 4px; border-width: 4px 5px 4px 0; border-right-color: #9a9a9a; }
.tri-right { right: 23px; top: 4px; border-width: 4px 0 4px 5px; border-left-color: #505050; }

.gutter { width: 8px; flex: none; display: flex; align-items: flex-start; justify-content: center; padding-top: 401px; background: #f4f4f4; }
.gutter-r { width: 9px; }

/* right column */
.right-col { width: 1513px; flex: none; display: flex; flex-direction: column; background: #fff; }
.grid-wrap { border: solid #d0d0d0; border-width: 0 1px 1px; flex: none; }
.toolbar { height: 35px; display: flex; align-items: center; padding-left: 6px; border-bottom: 1px solid #d4d4d4; gap: 9px; }
.tb { width: 18px; height: 18px; fill: #0f6b8f; flex: none; }
.tb-refresh { color: #0f6b8f; fill: none; width: 16px; }
.tb-sep { width: 1px; height: 20px; background: #ddd; margin: 0 -3px; }
.apply { margin-left: auto; padding-right: 10px; display: flex; align-items: center; gap: 5px; color: #777; }

.g-cols { display: grid; grid-template-columns: 47px 86px 130px 300px 200px 200px 200px 200px 1fr; }
.g-head { height: 26px; background: linear-gradient(#fbfbfb, #e9e9e9); border-bottom: 1px solid #d2d2d2; position: relative; z-index: 1; }
.gh { display: flex; align-items: center; padding-left: 6px; border-right: 1px solid #d8d8d8; color: #3a3a3a; font-size: 12px; }
.gh:last-child { border-right: 0; }
.gh-id { padding-left: 7px; }
.gh-name { padding-left: 5px; }
.grid-filter { width: 18px; height: 18px; margin-left: 10px; }
.sort-up { width: 9px; height: 15px; margin-left: 4px; }
.g-mid { height: 303px; display: flex; }
.g-view { flex: 1; min-width: 0; overflow: hidden; }
.g-rows { margin-top: -17px; }
.g-row { height: 40px; border-bottom: 1px solid #d8d8d8; align-items: center; color: #3a3a3a; grid-template-columns: 47px 86px 130px 300px 200px 200px 200px 200px 132px; }
.g-row > span { padding-left: 6px; white-space: nowrap; overflow: hidden; }
.g-row > span:nth-child(2) { padding-left: 7px; }
.g-row > span:nth-child(4) { padding-left: 5px; }
.g-sel { background: #c0daf0; }
.g-row > .acts { display: flex; padding: 0 0 0 39px; align-items: center; height: 100%; }
.acts svg, .acts i { width: 26px; height: 16px; flex: none; }
.acts .fo { fill: #0f6b8f; height: 14px; }
.g-vthumb { position: absolute; left: 2px; right: 2px; top: 117px; height: 170px; background: #bdbdbd; }
.g-hscroll { height: 17px; border-bottom: 1px solid #d0d0d0; }
.g-hthumb { position: absolute; left: 17px; width: 1239px; top: 2px; bottom: 2px; background: #bdbdbd; }
.g-corner { width: 16px; }
.g-hscroll .tri-right { right: 22px; }

.pager { height: 39px; display: flex; align-items: center; color: #666; padding-left: 10px; }
.pg-first, .pg-prev, .pg-next, .pg-last { width: 0; height: 0; border-style: solid; border-color: transparent; }
.pg-first { border-width: 7px 8px 7px 0; border-right-color: #8a8a8a; margin-left: 2px; box-shadow: -2px 0 0 -1px #8a8a8a; }
.pg-prev { border-width: 7px 8px 7px 0; border-right-color: #8a8a8a; margin-left: 13px; }
.pg-next { border-width: 7px 0 7px 8px; border-left-color: #8a8a8a; margin-left: 23px; }
.pg-last { border-width: 7px 0 7px 8px; border-left-color: #8a8a8a; margin-left: 13px; box-shadow: 2px 0 0 -1px #8a8a8a; }
.pg-page { margin-left: 23px; }
.pg-input { width: 50px; height: 24px; border: 1px solid #d0d0d0; margin-left: 15px; padding: 5px 6px; color: #333; font-size: 14px; line-height: 14px; }
.pg-of { margin-left: 6px; }
.pg-rpp { margin-left: 24px; }
.pg-select { width: 64px; height: 24px; border: 1px solid #d0d0d0; margin-left: 12px; padding: 5px 6px; color: #333; position: relative; font-size: 14px; line-height: 14px; }
.pg-select svg { position: absolute; right: 5px; top: 7px; width: 10px; height: 7px; }
.pg-display { margin-left: auto; padding-right: 11px; }

.splitter { height: 8px; flex: none; display: flex; align-items: center; justify-content: center; background: #fff; }

.viewer-bar {
  height: 36px; flex: none; background: #ebebeb; border: 1px solid #d0d0d0;
  display: flex; justify-content: flex-end; align-items: stretch;
}
.vb-box { border-left: 1px solid #dcdcdc; border-right: 1px solid #dcdcdc; padding: 8px 17px 0 11px; }
.vb-select {
  display: flex; align-items: center; justify-content: space-between; width: 110px; height: 19px;
  border: 1px solid #333; border-radius: 2px; background: #fff; color: #222; padding: 0 4px;
}
.vb-select svg { width: 10px; height: 10px; }
.vb-actions { width: 67px; display: flex; align-items: center; gap: 7px; padding-left: 14px; }
.vb-dl { width: 17px; height: 20px; }
.vb-open { width: 15px; height: 23px; }

/* editor */
.editor { flex: none; border-right: 1px solid #d0d0d0; border-left: 1px solid #d0d0d0; border-bottom: 1px solid #d0d0d0; }
.ed-head { height: 56px; background: #446995; color: #fff; font-size: 12px; }
.ed-title-row { height: 29px; display: grid; grid-template-columns: 1fr auto 1fr; align-items: center; }
.ed-quick { display: flex; gap: 24px; padding-left: 11px; }
.eq { width: 16px; height: 16px; }
.ed-filename { padding-top: 2px; }
.ed-user { display: flex; justify-content: flex-end; padding-right: 10px; }
.avatar {
  width: 20px; height: 20px; border-radius: 50%;
  background: #dfe3e9; color: #5b6675; font-size: 9px; line-height: 20px; text-align: center;
}
.ed-tab-row { height: 27px; display: flex; align-items: stretch; padding-left: 12px; }
.ed-tab { display: flex; align-items: center; padding: 0 12px 0 0; margin-right: 12px; }
.ed-tab:first-child { padding-right: 0; margin-right: 12px; }
.ed-tab-on { background: #f1f1f1; color: #446995; padding: 0 12px; margin-right: 12px; }
.ed-search { width: 16px; height: 16px; margin: 5px 11px 0 auto; color: #d5deea; }

.ribbon { height: 67px; background: #f1f1f1; border-bottom: 1px solid #cbcbcb; display: flex; padding: 9px 0 0 5px; }
.ic { width: 20px; height: 20px; flex: none; color: #444; display: block; }
.ic.dim { color: #888; }
.ic-on { background: #7d858c; color: #fff; height: 22px; }
.rb-clip { display: grid; grid-template-columns: 30px 30px; grid-auto-rows: 22px; row-gap: 6px; width: 60px; justify-items: center; align-items: center; }
.rb-sep { width: 1px; height: 52px; background: #cbcbcb; margin: 1px 10px 0 5px; flex: none; }
.rb-sep2 { margin-left: 10px; margin-right: 10px; }
.rb-sep3 { margin-left: 10px; margin-right: 10px; }
.rb-font { width: 208px; display: flex; flex-direction: column; gap: 6px; }
.rb-line { display: flex; align-items: center; height: 22px; }
.rb-combo { height: 22px; background: #fff; border: 1px solid #cbcbcb; border-radius: 2px; display: flex; align-items: center; justify-content: space-between; padding-left: 3px; font-size: 12px; color: #444; margin-right: 2px; }
.c-font { width: 84px; }
.c-size { width: 44px; }
.c-text { overflow: hidden; white-space: nowrap; min-width: 0; flex: 1; }
.c-font .c-text { color: #446995; font-size: 11.500px; }
.vv { width: 11px; height: 10px; flex: none; display: block; }
.vv-tight { margin-left: -4px; }
.tx { width: 20px; height: 20px; flex: none; text-align: center; line-height: 20px; font-size: 14px; color: #444; }
.tx sup, .tx sub { font-size: 8px; line-height: 0; }
.a-plus { margin-left: 2px; }
.a-minus { margin-left: 2px; font-size: 12px; }
.a-case { margin-left: 3px; }
.rb-fmt { gap: 4px; }
.t-b { background: #7d858c; color: #fff; font-weight: 700; border-radius: 1px; height: 22px; line-height: 22px; }
.t-i { font-style: italic; font-family: "Liberation Serif", serif; }
.t-u { text-decoration: underline; }
.t-s { text-decoration: line-through; }
.t-color { border-bottom: 3px solid #000; height: 20px; line-height: 18px; margin-left: -2px; }
.rb-para { width: 186px; display: grid; grid-template-columns: repeat(6, 20px 11px); grid-auto-rows: 22px; row-gap: 6px; align-items: center; color: #444; }
.t-para { font-size: 17px; }
.rb-misc { width: 61px; display: grid; grid-template-columns: 20px 10px 20px 11px; grid-auto-rows: 22px; row-gap: 6px; align-items: center; }
.gallery { margin: 2px 0 0 12px; height: 45px; width: 916px; flex: none; display: flex; background: #fff; border: 1px solid #cfcfcf; font: 16px/1.1 "Liberation Serif", serif; color: #222; }
.st { width: 109.300px; flex: none; padding: 17px 13px 0 12px; border-right: 1px solid #d8d8d8; overflow: hidden; }
.st > span { display: block; white-space: nowrap; overflow: hidden; }
.st-on { border: 2px solid #848484; margin: -1px 0 -1px -1px; width: 109px; padding-left: 11px; }
.st-hr { font-size: 8.500px; padding-top: 24px; }
.st-hr > span { text-decoration: underline; width: 60px; }
.st-blank { width: 15px; padding: 0; }
.st-more { flex: 1; display: flex; align-items: center; justify-content: center; }
.st-more svg { width: 12px; height: 8px; }

.ed-body { height: 200px; display: flex; }
.ed-left { width: 39px; flex: none; border-right: 1px solid #c8c8c8; background: #f1f1f1; display: flex; flex-direction: column; align-items: center; gap: 18px; padding-top: 21px; }
.ic-l { width: 20px; height: 20px; color: #333; flex: none; }
.canvas { width: 1199px; flex: none; overflow: hidden; background: #e2e2e2; }
.ruler-row { display: flex; padding: 7px 0 0 4px; }
.l-btn { width: 14px; height: 14px; background: #f1f1f1; border: 1px solid #cfcfcf; flex: none; position: relative; }
.l-btn b { position: absolute; left: 3px; top: 3px; width: 6px; height: 6px; border-left: 2px solid #000; border-bottom: 2px solid #000; }
.h-ruler {
  margin-left: 194px; width: 792px; height: 13px; flex: none; position: relative;
  display: flex; padding-left: 18px; font-size: 10px; line-height: 13px; color: #777; text-align: center;
  background:
    linear-gradient(90deg, transparent 9px, #777 9px 10px, transparent 10px 18px, #777 18px 19px, transparent 19px 28px, #777 28px 29px, transparent 29px) 37px 4px / 37.800px 5px repeat-x,
    linear-gradient(90deg, #cfcfcf 75px, #fff 75px, #fff 756px, #cfcfcf 756px);
}
.h-ruler > span { width: 37.800px; flex: none; }
.mk { position: absolute; width: 12px; height: 24px; top: -3px; }
.mk-l { left: 69px; }
.mk-r { left: 750px; }
.page-row { display: flex; margin-top: 25px; height: 160px; }
.v-ruler {
  margin: 1px 195px 0 5px; width: 11px; flex: none; display: flex; flex-direction: column; align-items: center;
  padding-top: 57px; font-size: 9px; color: #777;
  background:
    linear-gradient(180deg, transparent 9px, #777 9px 10px, transparent 10px 18px, #777 18px 19px, transparent 19px 28px, #777 28px 29px, transparent 29px) 3px 0 / 5px 37.800px repeat-y,
    linear-gradient(#cfcfcf 38px, #fff 38px);
}
.v-ruler span { height: 37.800px; flex: none; writing-mode: vertical-rl; line-height: 11px; text-align: center; }
.page {
  width: 795px; flex: none; height: 230px; background: #fff; border: 1px solid #c8c8c8; border-bottom: 0;
  padding: 38px 38px 0 76px; font: 13.330px/15px "Liberation Serif", serif; color: #111;
}
.p-exhibit { text-align: right; font-weight: 700; }
.caret { border-left: 1px solid #000; }
.p-title { text-align: center; font-weight: 700; margin-top: 37px; margin-bottom: 20px; }
.p-just { text-align: justify; text-align-last: justify; white-space: nowrap; }

.c-scroll { width: 15px; flex: none; background: #e2e2e2; position: relative; }
.c-btn { position: absolute; left: 0; top: 2px; width: 13px; height: 13px; background: #f1f1f1; border: 1px solid #cfcfcf; }
.c-btn .tri-up { left: 2px; top: 3px; border-bottom-color: #bbb; }
.c-thumb { position: absolute; left: 0; top: 17px; width: 13px; height: 33px; background: #f1f1f1; border: 1px solid #cfcfcf; }
.c-down { border-top-color: #bbb; left: 2px; bottom: 3px; }

.side-panel { width: 220px; flex: none; background: #f1f1f1; border-left: 1px solid #c8c8c8; border-right: 1px solid #c8c8c8; padding: 8px 10px 0 14px; overflow: hidden; font-size: 12px; color: #444; letter-spacing: .2px; }
.sp-label { height: 15px; line-height: 14px; }
.sp-second { margin-top: 8px; }
.sp-2col { display: grid; grid-template-columns: 84px 84px; column-gap: 13px; }
.sp-in { display: flex; align-items: center; justify-content: flex-end; height: 22px; background: #fff; border: 1px solid #d0d0d0; border-radius: 2px; padding-right: 19px; position: relative; color: #444; }
.sp-select { justify-content: flex-start; padding: 0 0 0 3px; }
.sp-select svg { position: absolute; right: 3px; top: 5px; width: 11px; height: 10px; }
.spin { position: absolute; right: 3px; top: 1px; font-size: 9px; line-height: 9px; color: #555; text-align: center; }
.sp-check { display: flex; gap: 8px; margin-top: 8px; line-height: 15px; }
.sp-check i { width: 14px; height: 14px; background: #fff; border: 1px solid #d0d0d0; border-radius: 2px; flex: none; }
.sp-hr { margin: 9px 0 8px; border: 0; border-top: 1px solid #cfcfcf; width: 194px; }

.side-tabs { flex: 1; background: #f1f1f1; padding-top: 16px; display: flex; flex-direction: column; align-items: center; }
.st-on-tab { width: 100%; height: 30px; background: #7d858c; color: #fff; text-align: center; line-height: 30px; font-size: 15px; margin-bottom: 13px; }
.s-ic { width: 20px; height: 20px; flex: none; margin-bottom: 18px; }

.status { height: 25px; background: #f1f1f1; border-top: 1px solid #cbcbcb; display: flex; align-items: center; font-size: 12px; color: #444; }
.s-page { width: 1012px; padding-left: 40px; }
.s-lang { border-left: 1px solid #cbcbcb; height: 100%; line-height: 23px; padding-left: 14px; width: 138px; }
.s-globe { margin-left: 3px; }
.s-abc { width: 20px; height: 20px; margin-left: 11px; background: #7d858c; color: #fff; font-size: 9px; line-height: 14px; text-align: center; }
.s-sep { width: 1px; height: 100%; background: #cbcbcb; margin: 0 9px; }
.s-gap { margin-left: 11px; }
.s-op { width: 20px; text-align: center; font-size: 18px; line-height: 20px; color: #333; }
.s-zoom { width: 62px; margin-left: 12px; margin-right: 12px; text-align: center; font-weight: 700; white-space: nowrap; font-size: 11.500px; }

.bottom-tabs { margin-top: 3px; height: 32px; flex: none; border: 1px solid #d0d0d0; display: flex; padding-left: 11px; color: #555; font-size: 12px; }
.bt { padding: 7px 0 0; margin-right: 31px; }
.bt-on { width: 58px; height: 26px; margin-top: -1px; text-align: center; padding-top: 8px; color: #111; font-weight: 700; background: #fff; border: 1px solid #d8d8d8; border-top: 0; border-radius: 0 0 4px 4px; margin-right: 21px; }

.info { flex: 1; background: #f5f5f5; border-left: 1px solid #d8d8d8; border-top: 1px solid #d8d8d8; display: flex; flex-direction: column; align-items: center; padding-top: 10px; }
.info-chev { width: 16px; height: 16px; flex: none; }
.info-label { writing-mode: vertical-rl; color: #0f6b8f; margin-top: 7px; font-size: 12.500px; }

.watermark { position: absolute; left: 1599px; top: 838px; color: rgba(110,110,110,.62); font-family: "Open Sans", sans-serif; z-index: 5; pointer-events: none; white-space: nowrap; }
.wm-1 { font-size: 18.500px; line-height: 26px; font-weight: 600; }
.wm-2 { font-size: 14.600px; line-height: 20px; }
```
